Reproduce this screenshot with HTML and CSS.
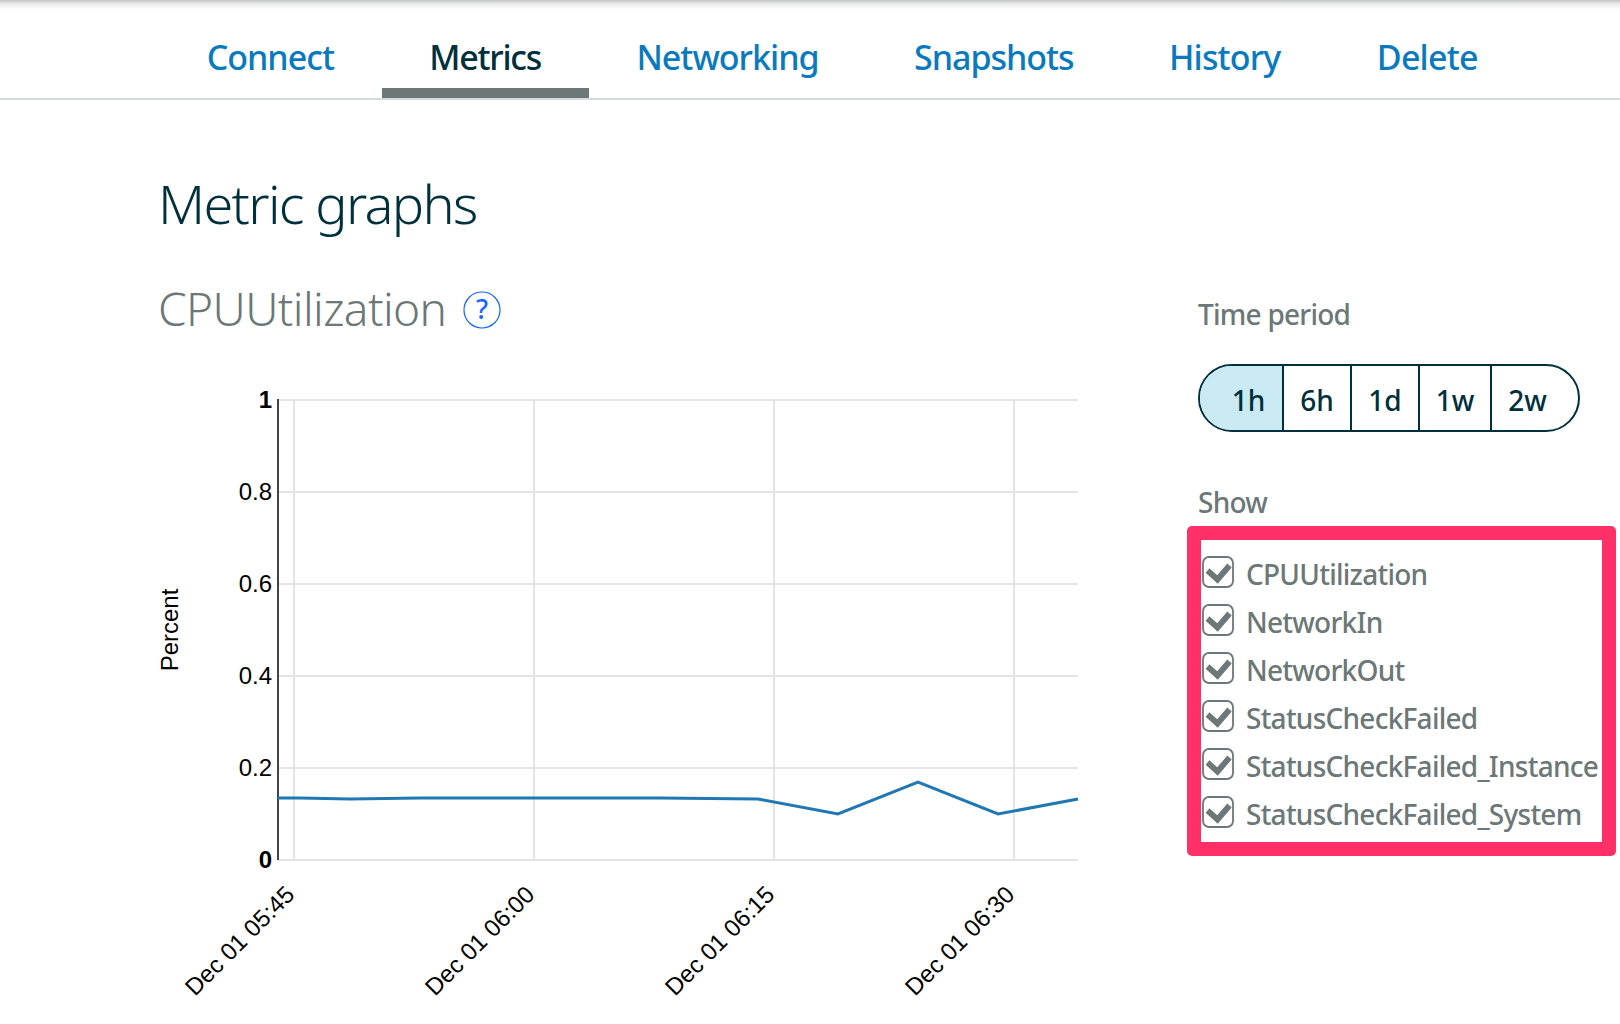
FILE: index.html
```html
<!DOCTYPE html>
<html lang="en">
<head>
<meta charset="utf-8">
<title>Metric graphs</title>
<link rel="stylesheet" href="styles.css">
</head>
<body>
<svg class="defs" width="0" height="0" aria-hidden="true">
  <symbol id="chk" viewBox="0 0 32 32">
    <rect x="1" y="1" width="30" height="30" rx="6" fill="#fff" stroke="#6c7778" stroke-width="1.8"/>
    <path d="M5.5 14.5 L15.5 23.5 L27.5 9.5" fill="none" stroke="#6c7778" stroke-width="5.8"/>
  </symbol>
</svg>
<div class="topshade"></div>
<nav class="tabs">
  <a class="tab tab-connect">Connect</a>
  <a class="tab tab-metrics active">Metrics</a>
  <a class="tab tab-networking">Networking</a>
  <a class="tab tab-snapshots">Snapshots</a>
  <a class="tab tab-history">History</a>
  <a class="tab tab-delete">Delete</a>
</nav>
<main class="main">
  <section class="left">
    <h1 class="title">Metric graphs</h1>
    <div class="chart-head">
      <h2 class="chart-title">CPUUtilization</h2>
      <svg class="help" viewBox="0 0 38 38" aria-hidden="true"><circle cx="19" cy="19" r="18" fill="none" stroke="#1166ff" stroke-width="1.2"/><text x="19" y="28" text-anchor="middle" class="help-q">?</text></svg>
    </div>
    <svg class="chart" viewBox="160 380 930 644" width="930" height="644">
      <g class="grid">
        <path d="M278 400H1078M278 492H1078M278 584H1078M278 676H1078M278 768H1078M278 860H1078"/>
        <path d="M294 400V860M534 400V860M774 400V860M1014 400V860"/>
      </g>
      <path class="axis" d="M278 399V860"/>
      <polyline class="series" points="278,798 300,798 350,799 420,798 660,798 758,799 838,814 918,782 998,814 1078,799"/>
      <g class="ticks">
        <text x="272" y="408" class="bold">1</text>
        <text x="272" y="500">0.8</text>
        <text x="272" y="592">0.6</text>
        <text x="272" y="684">0.4</text>
        <text x="272" y="776">0.2</text>
        <text x="272" y="868" class="bold">0</text>
      </g>
      <text class="ylabel" transform="translate(177.5 630) rotate(-90)" text-anchor="middle">Percent</text>
      <g class="xlabels">
        <text transform="translate(296 896) rotate(-45)" text-anchor="end">Dec 01 05:45</text>
        <text transform="translate(536 896) rotate(-45)" text-anchor="end">Dec 01 06:00</text>
        <text transform="translate(776 896) rotate(-45)" text-anchor="end">Dec 01 06:15</text>
        <text transform="translate(1016 896) rotate(-45)" text-anchor="end">Dec 01 06:30</text>
      </g>
    </svg>
  </section>
  <aside class="side">
    <div class="side-label">Time period</div>
    <div class="segments">
      <span class="seg seg-1h on">1h</span>
      <span class="seg seg-6h">6h</span>
      <span class="seg seg-1d">1d</span>
      <span class="seg seg-1w">1w</span>
      <span class="seg seg-2w">2w</span>
    </div>
    <div class="side-label show-label">Show</div>
    <div class="show-list">
      <label class="row"><svg class="cb"><use href="#chk"/></svg><span>CPUUtilization</span></label>
      <label class="row"><svg class="cb"><use href="#chk"/></svg><span>NetworkIn</span></label>
      <label class="row"><svg class="cb"><use href="#chk"/></svg><span>NetworkOut</span></label>
      <label class="row"><svg class="cb"><use href="#chk"/></svg><span>StatusCheckFailed</span></label>
      <label class="row"><svg class="cb"><use href="#chk"/></svg><span>StatusCheckFailed_Instance</span></label>
      <label class="row"><svg class="cb"><use href="#chk"/></svg><span>StatusCheckFailed_System</span></label>
    </div>
  </aside>
</main>
</body>
</html>
```
FILE: styles.css
```css
* { box-sizing: border-box; }
html, body { margin: 0; padding: 0; background: #fff; }
body {
  width: 1620px;
  height: 1024px;
  overflow: hidden;
  position: relative;
  font-family: "Noto Sans", "Liberation Sans", sans-serif;
  color: #6c7778;
}
.defs { position: absolute; }
.topshade {
  position: absolute;
  left: 0; top: 0; right: 0;
  height: 9px;
  background: linear-gradient(#c4c6c6, #e6e7e7 40%, #fff);
}
.tabs {
  display: flex;
  height: 100px;
  padding-left: 159px;
  border-bottom: 2px solid #d5dbdb;
}
.tab {
  height: 98px;
  padding: 34px 47.7px 0;
  border-bottom: 10px solid transparent;
  font-size: 34px;
  line-height: 46px;
  font-weight: 500;
  letter-spacing: -1px;
  color: #0a7abf;
  white-space: nowrap;
}
.tab.active { color: #00303c; border-bottom-color: #6c7778; letter-spacing: -1.25px; }
.tab-history { letter-spacing: -0.85px; }
.tab-delete { letter-spacing: -0.8px; padding-left: 48.8px; }
.main { display: flex; }
.left { width: 1198px; padding-left: 158px; flex: none; }
.title {
  margin: 68px 0 0;
  font-size: 54px;
  line-height: 70px;
  font-weight: 300;
  letter-spacing: -1.65px;
  color: #00303c;
}
.chart-head {
  display: flex;
  align-items: center;
  gap: 17px;
  margin-top: 40px;
  height: 60px;
}
.chart-title {
  margin: 0;
  font-size: 46px;
  line-height: 60px;
  font-weight: 300;
  letter-spacing: -0.6px;
  color: #6c7778;
}
.help { width: 38px; height: 38px; flex: none; margin-top: 4px; overflow: visible; }
.help-q { font: 500 27px "Noto Sans", sans-serif; fill: #1166ff; }
.chart { display: block; margin: 42px 0 0 2px; overflow: visible; }
.grid path { fill: none; stroke: #e4e4e4; stroke-width: 2; }
.axis { fill: none; stroke: #444; stroke-width: 2; }
.series { fill: none; stroke: #1f77b4; stroke-width: 3; }
.ticks text { font: 24px "Liberation Sans", Arial, sans-serif; fill: #000; text-anchor: end; }
.ticks .bold { font-weight: 700; }
.ylabel, .xlabels text { font: 24px "Liberation Sans", Arial, sans-serif; fill: #000; }
.side { flex: none; width: 422px; padding-top: 195px; }
.side-label {
  font-size: 28px;
  line-height: 38px;
  font-weight: 500;
  letter-spacing: -0.75px;
  color: #6c7778;
}
.segments {
  display: flex;
  width: 382px;
  height: 68px;
  margin-top: 31px;
  border: 2px solid #00303c;
  border-radius: 34px;
  overflow: hidden;
}
.seg {
  display: flex;
  align-items: center;
  justify-content: center;
  padding-top: 3px;
  font-size: 28px;
  font-weight: 500;
  color: #00303c;
  border-right: 2px solid #00303c;
}
.seg-1h { width: 84px; padding-left: 15px; background: #c9e9f3; }
.seg-6h { width: 68px; }
.seg-1d { width: 68px; }
.seg-1w { width: 72px; }
.seg-2w { flex: 1; border-right: 0; padding-right: 15px; }
.show-label { margin-top: 51px; }
.show-list {
  display: flex;
  flex-direction: column;
  gap: 16px;
  width: 429px;
  margin: 5px 0 0 -11px;
  padding: 16px 0 14px 1px;
  border: 14px solid #ff3068;
  border-radius: 5px;
  background: #fff;
}
.row {
  display: flex;
  align-items: center;
  height: 32px;
  gap: 12px;
  font-size: 28px;
  line-height: 32px;
  font-weight: 500;
  letter-spacing: -0.75px;
  color: #6c7778;
  white-space: nowrap;
}
.row span { position: relative; top: 2px; }
.cb { width: 32px; height: 32px; flex: none; }
```
